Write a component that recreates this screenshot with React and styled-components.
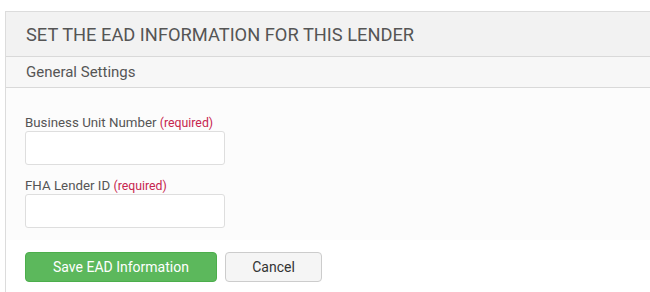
import React, { useState } from "react";
import styled, { createGlobalStyle } from "styled-components";

const GlobalStyle = createGlobalStyle`
  html, body {
    margin: 0;
    padding: 0;
    background: #fff;
    font-family: Roboto, "Liberation Sans", Arial, sans-serif;
  }
`;

const Page = styled.div`
  padding: 11px 0 0 5px;
  width: 650px;
  height: 292px;
  box-sizing: border-box;
  overflow: hidden;
`;

const Panel = styled.div`
  width: 700px;
  height: 290px;
  border-left: 1px solid #dcdcdc;
  border-top: 1px solid #dcdcdc;
`;

const Header = styled.h3`
  margin: 0;
  height: 44px;
  display: flex;
  align-items: center;
  padding-left: 20px;
  background: #f2f2f2;
  border-bottom: 1px solid #d9d9d9;
  color: #555;
  font-size: 18.3px;
  font-weight: 400;
  text-transform: uppercase;
`;

const SubHeader = styled.div`
  height: 30px;
  display: flex;
  align-items: center;
  padding-left: 20px;
  background: #f7f7f7;
  border-bottom: 1px solid #d9d9d9;
  color: #555;
  font-size: 15px;
`;

const Body = styled.div`
  background: #fcfcfc;
  padding: 27px 0 12px 19px;
  display: flex;
  flex-direction: column;
  gap: 13px;
`;

const Field = styled.div`
  display: flex;
  flex-direction: column;
`;

const Label = styled.label`
  font-size: 13.3px;
  color: #555;
  line-height: 15px;
`;

const Required = styled.span`
  font-size: 12.3px;
  color: #c7254e;
`;

const Input = styled.input`
  width: 200px;
  height: 34px;
  box-sizing: border-box;
  border: 1px solid #dedede;
  border-radius: 3px;
  background: #fff;
  outline: none;
`;

const Footer = styled.div`
  background: #fff;
  padding: 12px 0 0 19px;
  display: flex;
  gap: 8px;
`;

const Button = styled.button`
  height: 30px;
  width: ${(p) => p.$width}px;
  box-sizing: border-box;
  border-radius: 4px;
  font-family: inherit;
  font-size: 14px;
  cursor: pointer;
  border: 1px solid ${(p) => (p.$primary ? "#4cae4c" : "#ccc")};
  background: ${(p) => (p.$primary ? "#5cb85c" : "#f5f5f5")};
  color: ${(p) => (p.$primary ? "#fff" : "#333")};
`;

export default function App() {
  const [vals, setVals] = useState({ bu: "", fha: "" });
  const change = (e) => setVals({ ...vals, [e.target.name]: e.target.value });

  return (
    <Page>
      <GlobalStyle />
      <Panel>
        <Header>Set the EAD Information for this Lender</Header>
        <SubHeader>General Settings</SubHeader>
        <Body>
          <Field>
            <Label>
              Business Unit Number <Required>(required)</Required>
            </Label>
            <Input name="bu" value={vals.bu} onChange={change} />
          </Field>
          <Field>
            <Label>
              FHA Lender ID <Required>(required)</Required>
            </Label>
            <Input name="fha" value={vals.fha} onChange={change} />
          </Field>
        </Body>
        <Footer>
          <Button $primary $width={192}>Save EAD Information</Button>
          <Button $width={97}>Cancel</Button>
        </Footer>
      </Panel>
    </Page>
  );
}
